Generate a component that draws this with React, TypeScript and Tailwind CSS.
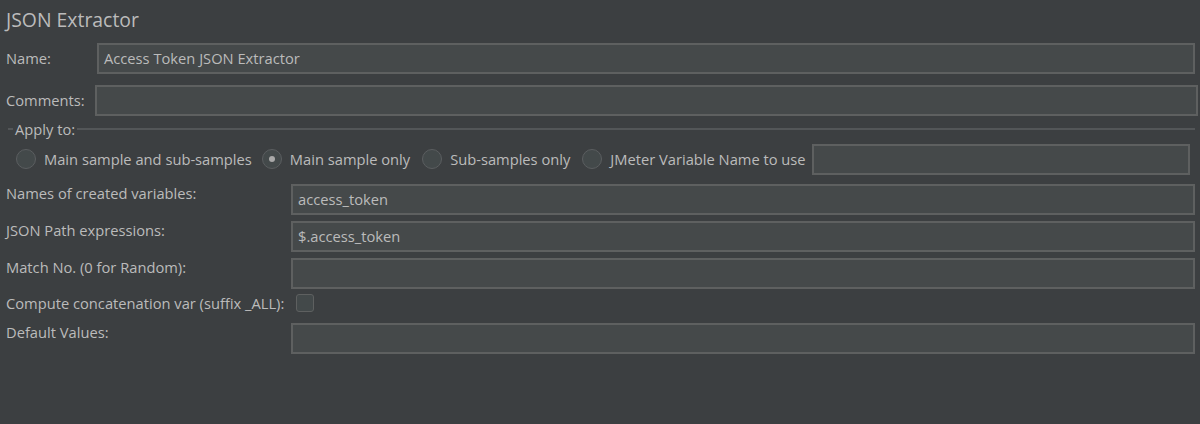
const font = { fontFamily: "'Open Sans', Lato, sans-serif" };

function Field({ value, className = "" }: { value?: string; className?: string }) {
  return (
    <div
      className={`h-[31px] bg-[#45494a] border-2 border-[#5e6060] flex items-center px-[5px] text-[14.7px] text-[#bbbbbb] ${className}`}
    >
      {value}
    </div>
  );
}

function Radio({ checked, label }: { checked?: boolean; label: string }) {
  return (
    <div className="flex items-center">
      <span className="w-[20px] h-[20px] rounded-full border border-[#5b5e60] bg-[#43494a] flex items-center justify-center">
        {checked && <span className="w-[6px] h-[6px] rounded-full bg-[#a9a9a9]" />}
      </span>
      <span className="ml-[8px]">{label}</span>
    </div>
  );
}

const rows = [
  { label: "Names of created variables:", value: "access_token" },
  { label: "JSON Path expressions:", value: "$.access_token" },
  { label: "Match No. (0 for Random):", value: "" },
];

export default function App() {
  return (
    <div className="w-[1200px] h-[424px] bg-[#3c3f41] text-[#bbbbbb] text-[14.7px] overflow-hidden" style={font}>
      <div className="pl-[6px] pt-[5px] h-[43px] text-[19.4px] text-[#bbbbbb]">JSON Extractor</div>

      <div className="flex items-center pl-[6px] pr-[5px]">
        <span className="w-[91px]">Name:</span>
        <Field value="Access Token JSON Extractor" className="flex-1" />
      </div>

      <div className="flex items-center pl-[6px] pr-[2px] mt-[11px]">
        <span className="w-[89px]">Comments:</span>
        <Field className="flex-1" />
      </div>

      <div className="relative mt-[3px] h-[16px] pl-[8px] pr-[5px] flex items-center">
        <div className="flex-1 h-[2px] bg-[#535658] mt-[4px]" />
        <span className="absolute left-[13px] top-[-1px] px-[2px] bg-[#3c3f41]">Apply to:</span>
      </div>

      <div className="flex items-center pl-[16px] mt-[9px] h-[30px]">
        <Radio label="Main sample and sub-samples" />
        <div className="ml-[10px]">
          <Radio checked label="Main sample only" />
        </div>
        <div className="ml-[12px]">
          <Radio label="Sub-samples only" />
        </div>
        <div className="ml-[12px]">
          <Radio label="JMeter Variable Name to use" />
        </div>
        <Field className="ml-[6px] w-[378px]" />
      </div>

      <div className="mt-[10px] flex flex-col gap-[6px] pl-[6px] pr-[5px]">
        {rows.map((r) => (
          <div key={r.label} className="flex items-start">
            <span className="w-[285px] leading-[18px]">{r.label}</span>
            <Field value={r.value} className="flex-1" />
          </div>
        ))}
        <div className="flex items-center h-[18px] -mt-[1px]">
          <span className="w-[290px] whitespace-nowrap">Compute concatenation var (suffix _ALL):</span>
          <span className="w-[18px] h-[18px] rounded-[3px] border border-[#5e6060] bg-[#43494a]" />
        </div>
        <div className="flex items-start mt-[5px]">
          <span className="w-[285px] leading-[18px]">Default Values:</span>
          <Field className="flex-1" />
        </div>
      </div>
    </div>
  );
}
